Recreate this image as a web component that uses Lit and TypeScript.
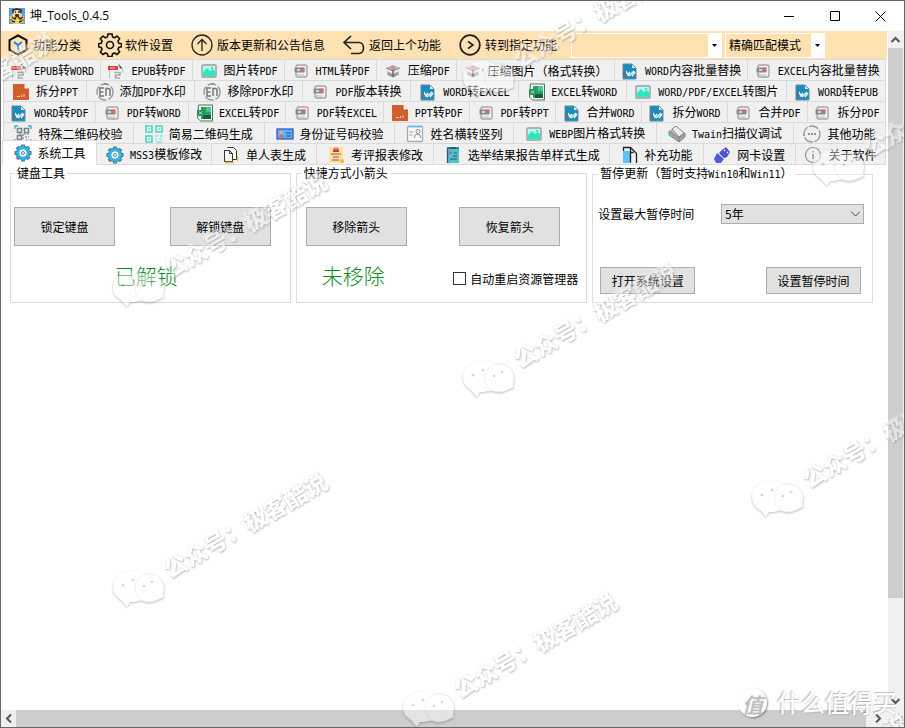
import { LitElement, html, svg, css } from "lit";
import { customElement, state } from "lit/decorators.js";
import { classMap } from "lit/directives/class-map.js";

const docWord = svg`<path d="M2 2h9l4 4v11H2z" fill="#1b8dbd"/><path d="M11 2v4h4z" fill="#dfe7ea"/><path d="M11 2l4 4v11H2V2h9" fill="none" stroke="#6c8794"/><path d="M5 9l2 4 2-3M8 14l5-5M11 14l3-4" fill="none" stroke="#f1fafd" stroke-width="1.400"/><path d="M2 9h3v7H2z" fill="#4c7c90"/>`;
const docPdf = svg`<rect x="4" y="3" width="11" height="12" rx="2" fill="#f1f1f1" stroke="#a5a5a5" stroke-width="1.400"/><rect x="2.500" y="5.500" width="10" height="5" rx="1" fill="#8a8a8a"/><path d="M5 8h3" fill="none" stroke="#eee" stroke-width="1.500"/><path d="M9.500 6.500h2v3" fill="none" stroke="#e86868" stroke-width="1.800"/><path d="M5 13h7" stroke="#bbb"/>`;
const compress = svg`<path d="M2 6l7-3 7 3-7 3z" fill="#b5b5b5"/><path d="M3 9l6 3 6-3-1 3-5 3-5-3z" fill="#a0a0a0"/><path d="M2 6l7 3 7-3M3 12l6 3 6-3" fill="none" stroke="#8a8a8a"/><circle cx="9" cy="6" r="2.200" fill="#e58a8a"/><path d="M9 8v7" stroke="#666" stroke-width="1.500"/>`;
const epub = svg`<path d="M3 2h9l4 4v9H3z" fill="#f3f3f3"/><path d="M11 1.500l5 5h-3z" fill="#5a5a5a"/><path d="M2.500 16V3M15.500 6v5" stroke="#bbb"/><rect x="1" y="4" width="10" height="4" fill="#e23c3c"/><path d="M3 6h5" stroke="#ffbcbc"/><path d="M7 10.500h6v2.500H8.500v3H13" fill="none" stroke="#ababab" stroke-width="1.600"/>`;
const gear = svg`<path d="M9 .5v3M9 14.500v3M.5 9h3M14.500 9h3M3 3l2 2M13 13l2 2M3 15l2-2M13 5l2-2" stroke="#56707d" stroke-width="3.800"/><circle cx="9" cy="9" r="5.500" fill="#fff" stroke="#56707d" stroke-width="3.400"/><path d="M9 1.500v2M9 14.500v2M1.500 9h2M14.500 9h2M3.700 3.700l1 1M13.300 13.300l1 1M3.700 14.300l1-1M13.300 4.700l1-1" stroke="#28b8f4" stroke-width="2.200"/><circle cx="9" cy="9" r="5.200" fill="none" stroke="#28b8f4" stroke-width="2.400"/><circle cx="9" cy="9" r="1.600" fill="#cdeefb" stroke="#6d8d9a"/>`;

const icons: Record<string, unknown> = {
  word: docWord,
  pdf: docPdf,
  compress,
  epub,
  gear,
  image: svg`<rect x="2" y="3" width="14" height="12" rx="1" fill="#fff" stroke="#8f9c9c" stroke-width="1.400"/><path d="M3 4h12v10H3z" fill="#b9f8ea"/><path d="M3 10l4-4 3 3 3-2 2 2v5H3z" fill="#2be8c1"/><circle cx="12" cy="6" r="1" fill="#27cbb0"/>`,
  ppt: svg`<path d="M1 1h11l5 5v11H1z" fill="#d0602b"/><path d="M12 1v5h5z" fill="#fff"/><path d="M12 1v5h5" fill="none" stroke="#b35a30"/><path d="M5 13.500h3M9.500 14v-2M12 14v-3" stroke="#f6cdb7"/>`,
  english: svg`<circle cx="9" cy="9" r="8" fill="none" stroke="#999" stroke-width="1.400" stroke-dasharray="9 2"/><path d="M8 5H4v8h4M4 9h3.500M10 13V5.500h2.500c1 0 1.500 1 1.500 2v5.500" fill="none" stroke="#777" stroke-width="1.500"/><path d="M8 .8h3" stroke="#38a9c4" stroke-width="1.500"/>`,
  excel: svg`<path d="M3.500 1h14v16h-12l-3-3z" fill="#fff" stroke="#48735b"/><path d="M6 3h10v12H6z" fill="#21a366"/><path d="M11 3h5v5h-5z" fill="#46c98a"/><path d="M8 11h8v4H8z" fill="#185c37"/><rect x="2" y="6" width="7" height="6" fill="#2a8f5c"/><path d="M4 7.500l3 3M7 7.500l-3 3" stroke="#bfe8d2"/>`,
  qrScan: svg`<path d="M1 4V1h3M14 1h3v3M17 14v3h-3M4 17H1v-3" fill="none" stroke="#38b3dc" stroke-width="1.400"/><path d="M3.500 3.500h4v4h-4zM10.500 3.500h4v4h-4zM3.500 10.500h4v4h-4z" fill="none" stroke="#7c858b" stroke-width="1.600"/><path d="M10 9h5M9 9v6M11 12h4M12 15h3M5 9h2" stroke="#8f9a9f" stroke-width="1.600" stroke-dasharray="2 1"/>`,
  qr: svg`<path d="M1 1h6v6H1zM11 1h6v6h-6zM1 11h6v6H1z" fill="none" stroke="#4fd6bc" stroke-width="1.600"/><path d="M3.500 4h1.500M13.500 4H15M3.500 14H5" stroke="#4fd6bc" stroke-width="1.500"/><path d="M10 11h3M15 11h3M10 14h2M14 14h3M11 17h6" stroke="#8ce5d4" stroke-width="1.500"/>`,
  idCard: svg`<rect x="1" y="4" width="16" height="10" fill="#58b4ff" stroke="#2b4ec4" stroke-width="1.200"/><circle cx="5.500" cy="7.500" r="1.800" fill="#f3a675"/><path d="M3 12.500c0-4 5-4 5 0z" fill="#e06c50"/><path d="M10 8h5M10 11h5" stroke="#2450a0"/>`,
  contact: svg`<rect x="1.500" y="1.500" width="15" height="15" rx="1" fill="#fafafa" stroke="#a2abb0" stroke-width="1.300"/><path d="M2 1.500h14" stroke="#54bfe5" stroke-width="1.500"/><circle cx="12" cy="6.500" r="2" fill="none" stroke="#888"/><path d="M8.500 13c0-5 6-5 6 0M3.500 7h4M3.500 10h3" fill="none" stroke="#999" stroke-width="1.200"/>`,
  scanner: svg`<path d="M1 6l6-5 9 6 1 5-6 5L2 11z" fill="#b8bbbc"/><path d="M4 4l4-3 8 7-5 4z" fill="#ececec" stroke="#8b8b8b"/><path d="M1 6v4l10 7v-4zM11 13l6-5v4l-6 5" fill="#a5a5a5" stroke="#777" stroke-width=".8"/><path d="M1 10l3 2" stroke="#54bfe5" stroke-width="1.500"/>`,
  dots: svg`<circle cx="9" cy="9" r="8" fill="none" stroke="#999" stroke-width="1.300" stroke-dasharray="10 1.500"/><path d="M5 9h2M8 9h2M11 9h2" stroke="#777" stroke-width="1.500"/><path d="M1 9v2" stroke="#39b1dc" stroke-width="1.500"/>`,
  pages: svg`<path d="M5.500 1.500h6l3 3v9h-9" fill="#fff" stroke="#333"/><path d="M2.500 4.500h5l3 3v8h-8zM7.500 4.500v3h3" fill="#f8f8f8" stroke="#333"/><path d="M3 16.500h9M15.500 10v5" stroke="#f1b53b" stroke-width="1.300"/>`,
  report: svg`<path d="M2 1h14v16H2z" fill="#ffe0a6"/><path d="M6 6c0-6 6-6 6 0z" fill="#d32f2f"/><path d="M4 8h10M6 11h6M5 14h7" stroke="#8a5a46" stroke-width="1.200"/><path d="M9 2v2" stroke="#fff"/><circle cx="15" cy="15" r="2" fill="#f4b41e"/>`,
  clipboard: svg`<path d="M3 2h12v15H3z" fill="#4ec1c9"/><path d="M3 2h12M3.500 2v15" stroke="#295c74" stroke-width="1.300"/><path d="M6 1h6v2H6z" fill="#295c74"/><path d="M10 7h3M9 10h4M6 13h7" stroke="#275c74"/><path d="M5 7h3M6.500 5.500v3" stroke="#e9475c"/>`,
  file: svg`<path d="M2 5h8v12H2z" fill="#5ec4fb"/><path d="M2.500 5V1.500h7l6 6V17M9.500 1.500v15M9.500 6.500h3" fill="none" stroke="#222" stroke-width="1.300"/>`,
  plug: svg`<path d="M9 4l4-3 4 5-3 5-3 1-5-5z" fill="#4f51cc"/><path d="M4 7l7 6-3 4H3l-2-4z" fill="#5558d8"/><path d="M11 4l1 1M14 6l1 1" stroke="#fff" stroke-width="1.300"/><path d="M6 7l5 5" stroke="#8d90ea"/>`,
  info: svg`<circle cx="9" cy="9" r="7.500" fill="none" stroke="#999" stroke-width="1.200"/><path d="M9 8v5M9 5v1.500" stroke="#888" stroke-width="1.300"/>`,
};

const toolIcons: Record<string, unknown> = {
  category: svg`<path d="M12 2.500l8.500 4.500v10L12 21.500 3.500 17V7z" fill="none" stroke="#111" stroke-width="2"/><path d="M8 9l4 3 4-3M12 12v5" fill="none" stroke="#147df0" stroke-width="1.800"/>`,
  settings: svg`<path d="M10 1h4l.6 3 2 .8L19 3l2.600 2.600L20 8.200l.8 2 2.700.6v3l-2.700.6-.8 2 1.600 2.500L19 21.500 16.500 20l-2 .8L14 23.500h-4l-.6-2.700-2-.8L5 21.500 2.400 19 4 16.400l-.8-2-2.700-.6v-3l2.700-.6.8-2L2.400 5.600 5 3l2.400 1.800 2-.8z" fill="none" stroke="#111" stroke-width="1.600"/><circle cx="12" cy="12" r="3.500" fill="none" stroke="#111" stroke-width="1.600"/>`,
  up: svg`<circle cx="12" cy="12" r="10" fill="none" stroke="#222" stroke-width="1.300"/><path d="M12 18V6.500M7.500 11L12 6.500l4.500 4.500" fill="none" stroke="#222" stroke-width="1.300"/>`,
  back: svg`<path d="M9 3L2 9.500 9 16M2 9.500h15c6 0 6 11 0 11H9" fill="none" stroke="#222" stroke-width="1.700"/>`,
  go: svg`<circle cx="12" cy="12" r="9.800" fill="none" stroke="#222" stroke-width="1.700"/><path d="M10 8.500l5 3.500-5 3.500" fill="none" stroke="#222" stroke-width="1.600"/>`,
};

interface Tab { icon: string; label: string; share: number }
const tab = (icon: string, label: string, share: number): Tab => ({ icon, label, share });

const tabRows: Tab[][] = [
  [tab("epub", "EPUB转WORD", 97), tab("epub", "EPUB转PDF", 92), tab("image", "图片转PDF", 92), tab("pdf", "HTML转PDF", 92), tab("compress", "压缩PDF", 80), tab("compress", "压缩图片（格式转换）", 158), tab("word", "WORD内容批量替换", 134), tab("pdf", "EXCEL内容批量替换", 138)],
  [tab("ppt", "拆分PPT", 83), tab("english", "添加PDF水印", 108), tab("english", "移除PDF水印", 108), tab("pdf", "PDF版本转换", 108), tab("word", "WORD转EXCEL", 108), tab("excel", "EXCEL转WORD", 108), tab("image", "WORD/PDF/EXCEL转图片", 161), tab("word", "WORD转EPUB", 99)],
  [tab("word", "WORD转PDF", 92), tab("pdf", "PDF转WORD", 93), tab("excel", "EXCEL转PDF", 98), tab("pdf", "PDF转EXCEL", 98), tab("ppt", "PPT转PDF", 86), tab("pdf", "PDF转PPT", 86), tab("word", "合并WORD", 86), tab("word", "拆分WORD", 86), tab("pdf", "合并PDF", 80), tab("pdf", "拆分PDF", 78)],
  [tab("qrScan", "特殊二维码校验", 130), tab("qr", "简易二维码生成", 131), tab("idCard", "身份证号码校验", 131), tab("contact", "姓名横转竖列", 119), tab("image", "WEBP图片格式转换", 143), tab("scanner", "Twain扫描仪调试", 137), tab("dots", "其他功能", 92)],
  [tab("gear", "系统工具", 94), tab("gear", "MSS3模板修改", 115), tab("pages", "单人表生成", 105), tab("report", "考评报表修改", 117), tab("clipboard", "选举结果报告单样式生成", 177), tab("file", "补充功能", 93), tab("plug", "网卡设置", 92), tab("info", "关于软件", 90)],
];

const tools = [
  ["category", "功能分类"],
  ["settings", "软件设置"],
  ["up", "版本更新和公告信息"],
  ["back", "返回上个功能"],
  ["go", "转到指定功能"],
];

const stamps = [
  [112, 570], [112, 270], [462, 360], [751, 480], [402, 690], [462, 60], [812, 149], [-160, 130], [692, 810],
];

/* Latin runs sit on a half-width grid beside full-width characters. */
const mixed = (text: string) =>
  text.split(/([A-Za-z0-9\/]+)/).map((part, i) => (i % 2 ? html`<span class="latin">${part}</span>` : part));

@customElement("app-root")
export class AppRoot extends LitElement {
  @state() private selected = "系统工具";

  static styles = css`
    :host { display: block; font: 12px/16px "Liberation Sans", "Noto Sans CJK SC", sans-serif; color: #000; }
    * { box-sizing: border-box; }
    button, input, select { font: inherit; color: inherit; margin: 0; }
    button { padding: 0; border: 0; background: none; white-space: nowrap; }
    svg { display: block; flex: none; }
    .window { position: relative; display: flex; flex-direction: column; min-height: 100vh; overflow: hidden; border: 1px solid #666; background: #fff; }
    .titlebar { display: flex; align-items: center; height: 30px; padding: 0 1px 0 8px; font-family: "Open Sans", "Noto Sans CJK SC", sans-serif; }
    .title { margin: 0 auto 0 5px; font-size: 12px; font-weight: 400; }
    .caption { display: grid; place-items: center; width: 46px; height: 30px; }
    .caption:last-child { width: 45px; }
    .body { flex: 1; display: grid; grid-template-columns: minmax(0, 1fr) 17px; grid-template-rows: 1fr 17px; }
    .toolbar { display: flex; align-items: center; height: 28px; padding-left: 5px; background: #ffe1b2; font-family: "Noto Sans CJK SC", sans-serif; }
    .tool { display: flex; align-items: center; gap: 3px; margin-right: 17px; }
    .tool:nth-child(5) { margin-right: 14px; }
    .combo { position: relative; display: flex; height: 25px; border: 1px solid #fff; margin-right: 3px; }
    .combo.search { flex: 0 1 151px; }
    .combo.mode { width: 100px; flex: none; }
    .combo input, .combo select { flex: 1; min-width: 0; width: 100%; border: 0; padding: 0 3px; background: none; appearance: none; outline: none; }
    .drop { display: grid; place-items: center; flex: none; width: 13px; background: #fff; }
    .mode .drop { position: absolute; right: 0; top: 0; bottom: 0; pointer-events: none; }
    .tabs { padding: 0 1px 0 2px; }
    .row { display: flex; height: 21px; border-left: 1px solid #dadada; }
    .tab { display: flex; align-items: center; justify-content: center; gap: 6px; flex-basis: 0; min-width: 0; overflow: hidden; border: solid #dadada; border-width: 1px 1px 0 0; padding-top: 1px; background: #f0f0f0; font-family: "Noto Sans CJK SC", sans-serif; }
    .tab.active { margin: -3px 0 -1px -2px; border-left-width: 1px; padding-top: 0; background: #fff; z-index: 1; }
    .tabs .row:last-child { height: 22px; border-bottom: 1px solid #dadada; }
    .latin { font-family: "DejaVu Sans Mono", monospace; font-size: 10px; }
    .panel { display: grid; grid-template-columns: 281fr 292fr 281fr; gap: 5px; padding: 0 14px 0 9px; font-family: "Noto Sans CJK SC", sans-serif; }
    fieldset { display: flex; flex-direction: column; min-width: 0; height: 138px; margin: 0; padding: 26px 10px 0; border: 1px solid #dcdcdc; }
    .keyboard { padding: 26px 19px 0 3px; }
    .arrows { padding-right: 8px; padding-left: 9px; }
    .arrows .line:first-of-type { padding-right: 18px; }
    .pause { padding: 21px 8px 0 5px; }
    legend { padding: 0 2px; line-height: 16px; white-space: nowrap; }
    .keyboard legend { margin-left: 1px; }
    .arrows legend { margin-left: -4px; }
    .line { display: flex; align-items: center; justify-content: space-between; white-space: nowrap; }
    .push { height: 39px; width: 101px; border: 1px solid #adadad; background: #e1e1e1; }
    .push.small { width: 95px; height: 27px; }
    .status { margin: 15px 0 0; font-size: 21px; line-height: 28px; font-weight: 300; color: #0b8a1c; }
    .keyboard .status { text-align: center; padding-left: 8px; }
    .arrows .line + .line { padding-left: 16px; }
    .pause .line + .line { margin-top: 43px; padding: 0 3px 0 2px; }
    .check { display: flex; align-items: center; gap: 4px; margin-top: 22px; }
    .check input { appearance: none; width: 13px; height: 13px; border: 1px solid #333; background: #fff; }
    .check input:checked { background: #333; }
    .years { position: relative; display: flex; width: 143px; height: 20px; }
    .years select { width: 100%; padding: 0 3px; border: 1px solid #adadad; border-radius: 0; background: #e1e1e1; appearance: none; }
    .years svg { position: absolute; right: 4px; top: 7px; pointer-events: none; }
    .bar { display: flex; background: #f0f0f0; }
    .bar.vertical { flex-direction: column; border-left: 1px solid #fff; border-right: 1px solid #f0f0f0; }
    .bar.vertical .space { flex: 95; }
    .arrow { display: grid; place-items: center; flex: none; width: 15px; height: 17px; }
    .arrow.wide { width: 21px; padding-left: 4px; }
    .thumb { background: #cdcdcd; flex: 1; }
    .vertical .thumb { flex: 551; }
    .corner { display: grid; place-items: end; background: #f0f0f0; }
    .overlay { position: absolute; inset: 0; overflow: hidden; pointer-events: none; }
    .stamp { position: absolute; width: 240px; height: 40px; opacity: .45; }
    .stamp svg { filter: drop-shadow(0 1px 1px rgba(0, 0, 0, .55)); }
    .words { position: absolute; left: 52px; top: -15px; transform: rotate(-30deg); transform-origin: 0 50%; font: 900 23px/28px "Noto Sans CJK SC", sans-serif; white-space: nowrap; color: #fff; -webkit-text-stroke: 2px #fff; text-shadow: 0 1px 2px rgba(0, 0, 0, .75); paint-order: stroke fill; }
    .brand { position: absolute; right: 7px; bottom: 9px; display: flex; align-items: center; gap: 10px; font: 500 24px/32px "Noto Sans CJK SC", sans-serif; color: #fff; text-shadow: -1px -1px 1px rgba(0, 0, 0, .25), 1px 1px 1px rgba(0, 0, 0, .1); }
    .seal { display: grid; place-items: center; width: 29px; height: 29px; border-radius: 50%; background: #fff; box-shadow: 1px 1px 2px rgba(0, 0, 0, .4); font-size: 21px; font-weight: 700; font-style: italic; color: #c0c0c0; text-shadow: none; }
  `;

  private chevron(d: string) {
    return html`<svg width="11" height="11" viewBox="0 0 11 11"><path d=${d} fill="none" stroke="#555" stroke-width="2" /></svg>`;
  }

  private triangle() {
    return html`<svg width="5" height="3" viewBox="0 0 5 3"><path d="M0 0h5L2.500 3z" /></svg>`;
  }

  private renderTab(t: Tab) {
    const active = t.label === this.selected;
    return html`<button role="tab" aria-selected=${active} class=${classMap({ tab: true, active })}
      style="flex-grow:${t.share}" @click=${() => (this.selected = t.label)}>
      <svg width="18" height="18" viewBox="0 0 18 18">${icons[t.icon]}</svg><span>${mixed(t.label)}</span>
    </button>`;
  }

  render() {
    return html`
      <div class="window">
        <header class="titlebar">
          <svg width="16" height="16" viewBox="0 0 16 16">
            <rect width="16" height="16" fill="#5d9fe0" /><path d="M1 9l3-3 7-1 4 4v5l-5 2H5l-4-3z" fill="#f3cf6c" />
            <circle cx="8" cy="5" r="3.500" fill="#f5e0a0" /><path d="M4 5V2l4-1 4 1v3M6 4h1M9 4h2M3 9l3 2 2-4 3 4 3-2M3 13l3 1M10 14l3-1M6 7h4" fill="none" stroke="#2b2420" stroke-width="1.400" />
            <path d="M1 12h3M12 12h3" stroke="#c97e21" stroke-width="2" />
          </svg>
          <h1 class="title">坤_Tools_0.4.5</h1>
          <button class="caption" aria-label="最小化"><svg width="11" height="11"><path d="M0 5.500h10" stroke="#000" /></svg></button>
          <button class="caption" aria-label="最大化"><svg width="11" height="11"><path d="M.5.5h9v9h-9z" fill="none" stroke="#000" /></svg></button>
          <button class="caption" aria-label="关闭"><svg width="11" height="11"><path d="M.5.5l10 10M10.500.5l-10 10" stroke="#000" /></svg></button>
        </header>
        <div class="body">
          <main>
            <nav class="toolbar">
              ${tools.map(([icon, label]) => html`<button class="tool"><svg width="24" height="24" viewBox="0 0 24 24">${toolIcons[icon]}</svg>${label}</button>`)}
              <div class="combo search"><input type="text" aria-label="指定功能" /><button class="drop" aria-label="展开">${this.triangle()}</button></div>
              <div class="combo mode"><select aria-label="匹配模式"><option>精确匹配模式</option></select><span class="drop">${this.triangle()}</span></div>
            </nav>
            <div class="tabs" role="tablist">${tabRows.map((row) => html`<div class="row">${row.map((t) => this.renderTab(t))}</div>`)}</div>
            <section class="panel">
              <fieldset class="keyboard">
                <legend>键盘工具</legend>
                <div class="line"><button class="push">锁定键盘</button><button class="push">解锁键盘</button></div>
                <p class="status">已解锁</p>
              </fieldset>
              <fieldset class="arrows">
                <legend>快捷方式小箭头</legend>
                <div class="line"><button class="push">移除箭头</button><button class="push">恢复箭头</button></div>
                <div class="line"><p class="status">未移除</p><label class="check"><input type="checkbox" />自动重启资源管理器</label></div>
              </fieldset>
              <fieldset class="pause">
                <legend>${mixed("暂停更新（暂时支持Win10和Win11）")}</legend>
                <div class="line">
                  <label for="years">设置最大暂停时间</label>
                  <div class="years"><select id="years"><option>5年</option></select>
                    <svg width="9" height="6" viewBox="0 0 9 6"><path d="M0 .5l4.500 4.500L9 .5" fill="none" stroke="#444" /></svg></div>
                </div>
                <div class="line"><button class="push small">打开系统设置</button><button class="push small">设置暂停时间</button></div>
              </fieldset>
            </section>
          </main>
          <div class="bar vertical">
            <span class="arrow">${this.chevron("M1.500 8l4-4 4 4")}</span><span class="thumb"></span><span class="space"></span><span class="arrow">${this.chevron("M1.500 3l4 4 4-4")}</span>
          </div>
          <div class="bar">
            <span class="arrow">${this.chevron("M8 1.500l-4 4 4 4")}</span><span class="thumb"></span><span class="arrow wide">${this.chevron("M3 1.500l4 4-4 4")}</span>
          </div>
          <div class="corner"><svg width="12" height="12"><path d="M9 2h2M6 5h2M9 5h2M3 8h2M6 8h2M9 8h2" stroke="#bbb" stroke-width="2" /></svg></div>
        </div>
        <div class="overlay" aria-hidden="true">
          ${stamps.map(([x, y]) => html`<div class="stamp" style="left:${x}px;top:${y}px">
            <svg width="52" height="38" viewBox="0 0 52 38">
              <path d="M20 0C8 0 0 7 0 16c0 6 3 10 8 13l6 7 3-5c3 0 6 0 8-1l14-2C42 10 34 0 20 0z" fill="#fff" />
              <path d="M36 3c-8 0-14 6-14 14s6 14 14 14c3 0 6-1 8-2l7-3-1-3c4-11-4-20-14-20z" fill="#fff" stroke="#ccc" stroke-width=".6" />
              <g fill="#aaa"><circle cx="10" cy="14" r="1.500" /><circle cx="20" cy="9" r="1.500" /><circle cx="31" cy="15" r="1.300" /><circle cx="39" cy="11" r="1.300" /></g>
            </svg>
            <span class="words">公众号：极客酷说</span>
          </div>`)}
          <div class="brand"><span class="seal">值</span><span>什么值得买</span></div>
        </div>
      </div>
    `;
  }
}
